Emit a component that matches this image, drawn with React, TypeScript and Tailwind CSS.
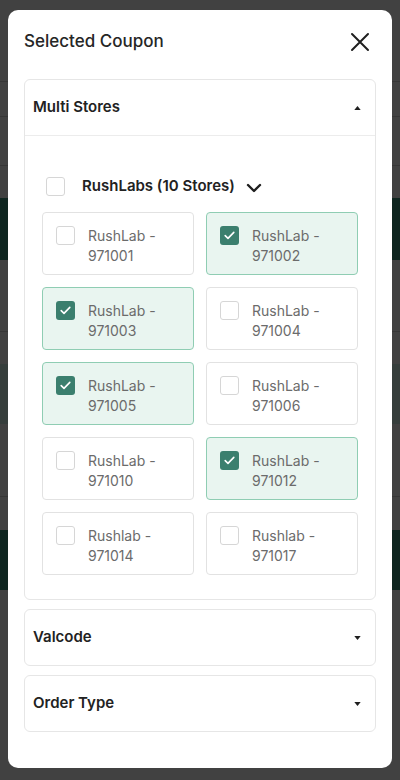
import { useState } from 'react'

type Store = { name: string; code: string; checked: boolean }

const initialStores: Store[] = [
  { name: 'RushLab', code: '971001', checked: false },
  { name: 'RushLab', code: '971002', checked: true },
  { name: 'RushLab', code: '971003', checked: true },
  { name: 'RushLab', code: '971004', checked: false },
  { name: 'RushLab', code: '971005', checked: true },
  { name: 'RushLab', code: '971006', checked: false },
  { name: 'RushLab', code: '971010', checked: false },
  { name: 'RushLab', code: '971012', checked: true },
  { name: 'Rushlab', code: '971014', checked: false },
  { name: 'Rushlab', code: '971017', checked: false },
]

function Checkbox({ checked }: { checked: boolean }) {
  if (checked) {
    return (
      <span className="flex size-[19px] shrink-0 items-center justify-center rounded-[3px] bg-[#3b7f6e]">
        <svg width="11" height="9" viewBox="0 0 11 9" fill="none">
          <path d="M1.2 4.6 4 7.4 9.8 1.4" stroke="white" strokeWidth="1.6" strokeLinecap="round" strokeLinejoin="round" />
        </svg>
      </span>
    )
  }
  return <span className="size-[19px] shrink-0 rounded-[3px] border border-[#d6d6d6] bg-white" />
}

function Caret({ up }: { up?: boolean }) {
  return (
    <svg width="7" height="4" viewBox="0 0 8 5" className={up ? 'rotate-180' : ''}>
      <path d="M0 0h8L4 5z" fill="#1f1f1f" />
    </svg>
  )
}

function CollapsedSection({ title }: { title: string }) {
  return (
    <div className="flex h-[57px] items-center justify-between rounded-[6px] border border-[#e6e6e6] pl-2 pr-[14px]">
      <span className="text-[15px] font-semibold text-[#222]">{title}</span>
      <Caret />
    </div>
  )
}

export default function App() {
  const [stores, setStores] = useState(initialStores)

  const toggle = (i: number) =>
    setStores(s => s.map((st, j) => (j === i ? { ...st, checked: !st.checked } : st)))

  return (
    <div className="relative h-[780px] w-[400px] overflow-hidden bg-[#414141] font-['Inter',sans-serif]">
      {/* dimmed page behind the modal */}
      <div className="flex flex-col">
        <div className="h-[82px] border-b border-[#363636]" />
        <div className="h-[35px] border-b border-[#363636]" />
        <div className="h-[49px] border-b border-[#363636]" />
        <div className="h-[32px]" />
        <div className="h-[62px] bg-[#0f2620]" />
        <div className="h-[72px] border-b border-[#363636]" />
        <div className="h-[32px]" />
        <div className="h-[60px] bg-[#363e3c]" />
        <div className="h-[73px] border-b border-[#363636]" />
        <div className="h-[33px]" />
        <div className="h-[60px] bg-[#0f2620]" />
      </div>

      <div className="absolute left-[8px] top-[10px] flex h-[758px] w-[384px] flex-col rounded-[10px] bg-white px-4">
        <div className="mb-[6px] flex h-[63px] items-center justify-between pr-[6px]">
          <span className="text-[17px] font-medium text-[#262626]">Selected Coupon</span>
          <svg width="20" height="20" viewBox="0 0 20 20" fill="none">
            <path d="M2 2l16 16M18 2 2 18" stroke="#1f1f1f" strokeWidth="2" strokeLinecap="round" />
          </svg>
        </div>

        <div className="rounded-[6px] border border-[#e6e6e6]">
          <div className="flex h-[56px] items-center justify-between border-b border-[#ececec] pl-2 pr-[14px]">
            <span className="text-[15px] font-semibold text-[#222]">Multi Stores</span>
            <Caret up />
          </div>

          <div className="px-[17px] pb-[24px] pt-[31px]">
            <div className="mb-[7px] flex h-[38px] items-center pl-1">
              <Checkbox checked={false} />
              <span className="ml-[17px] text-[15px] font-semibold text-[#222]">RushLabs (10 Stores)</span>
              <svg width="16" height="10" viewBox="0 0 16 10" fill="none" className="ml-[11px] mt-[3px]">
                <path d="M2 2l6 6 6-6" stroke="#1f1f1f" strokeWidth="2.4" strokeLinecap="round" strokeLinejoin="round" />
              </svg>
            </div>

            <div className="grid grid-cols-2 gap-x-3 gap-y-3">
              {stores.map((s, i) => (
                <button
                  key={s.code}
                  onClick={() => toggle(i)}
                  className={
                    'flex h-[63px] items-start gap-[13px] rounded-[4px] border pl-[13px] pt-[13px] text-left ' +
                    (s.checked ? 'border-[#8fcdb3] bg-[#e9f5f0]' : 'border-[#e2e2e2] bg-white')
                  }
                >
                  <Checkbox checked={s.checked} />
                  <span className="text-[14px] leading-[20px] text-[#6b6b6b]">
                    {s.name} -
                    <br />
                    {s.code}
                  </span>
                </button>
              ))}
            </div>
          </div>
        </div>

        <div className="mt-[9px] flex flex-col gap-[9px]">
          <CollapsedSection title="Valcode" />
          <CollapsedSection title="Order Type" />
        </div>
      </div>
    </div>
  )
}
